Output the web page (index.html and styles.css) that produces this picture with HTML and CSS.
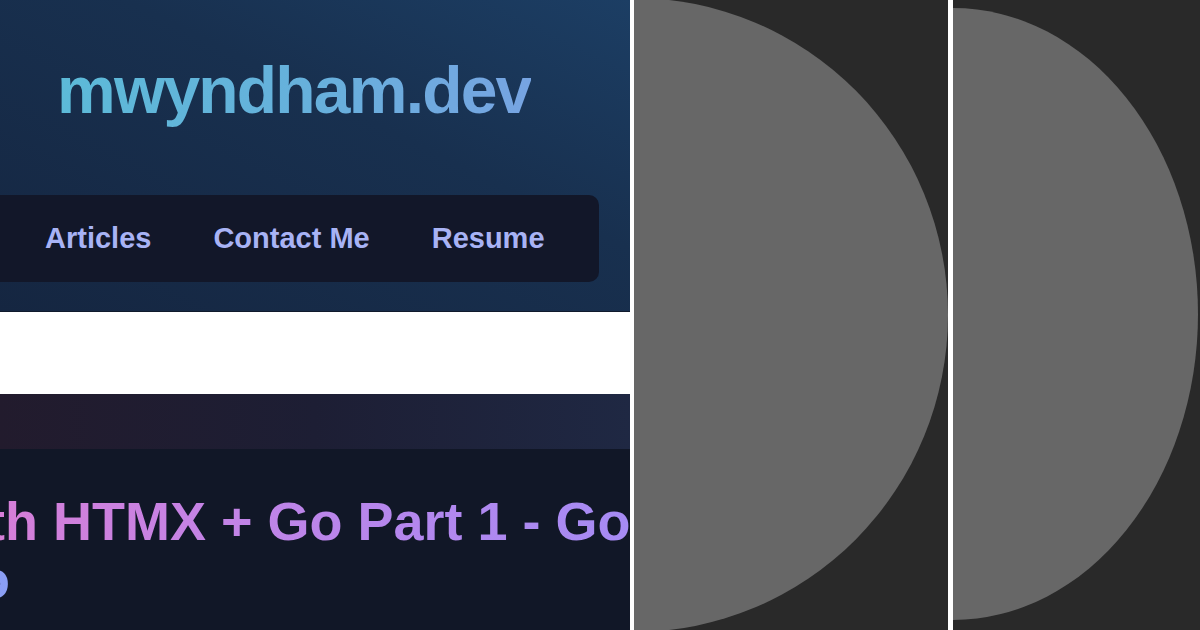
FILE: index.html
```html
<!DOCTYPE html>
<html lang="en">
<head>
<meta charset="utf-8">
<title>mwyndham.dev</title>
<link rel="stylesheet" href="styles.css">
</head>
<body>
<div class="screen">
  <section class="site">
    <header class="masthead">
      <h1 class="brand"><span class="brand-text">mwyndham.dev</span></h1>
      <nav class="nav">
        <a class="nav-link" href="#">Articles</a>
        <a class="nav-link" href="#">Contact Me</a>
        <a class="nav-link" href="#">Resume</a>
      </nav>
    </header>
    <div class="spacer"></div>
    <main class="post">
      <div class="post-band"></div>
      <article class="post-card">
        <h2 class="post-title">
          <span class="line line-1">with HTMX + Go Part 1 - Go</span>
          <span class="line line-2">Go</span>
        </h2>
      </article>
    </main>
  </section>
  <div class="thumb thumb-a">
    <svg class="thumb-art" width="314" height="630" viewBox="0 0 314 630" aria-hidden="true">
      <ellipse cx="0" cy="315" rx="314" ry="317" fill="#676767"/>
    </svg>
  </div>
  <div class="thumb thumb-b">
    <svg class="thumb-art" width="247" height="630" viewBox="0 0 247 630" aria-hidden="true">
      <ellipse cx="0" cy="314" rx="245" ry="306" fill="#676767"/>
    </svg>
  </div>
</div>
</body>
</html>
```
FILE: styles.css
```css
html, body {
  margin: 0;
  padding: 0;
  background: #ffffff;
}

body {
  width: 1200px;
  height: 630px;
  overflow: hidden;
  font-family: "Liberation Sans", Arial, sans-serif;
}

.screen {
  display: flex;
  gap: 4px;
  width: 1200px;
  height: 630px;
  background: #ffffff;
}

.site {
  width: 630px;
  flex: 0 0 630px;
  height: 630px;
  overflow: hidden;
  display: flex;
  flex-direction: column;
  background: #ffffff;
}

.masthead {
  box-sizing: border-box;
  height: 312px;
  flex: 0 0 312px;
  background: linear-gradient(to bottom left, #1c3e64 0%, #18304f 40%, #152641 100%);
  border-bottom: 1px solid #101a2c;
}

.brand {
  margin: 0;
  padding: 57px 0 0 57px;
  font-size: 66px;
  line-height: 66px;
  font-weight: 700;
  letter-spacing: -1.8px;
  white-space: nowrap;
}

.brand-text {
  background: linear-gradient(90deg, #5cbad8 0%, #67b0dc 55%, #77a4e2 100%);
  -webkit-background-clip: text;
  background-clip: text;
  color: transparent;
}

.nav {
  display: flex;
  align-items: center;
  gap: 62px;
  width: max-content;
  height: 87px;
  margin: 72px 0 0 -20px;
  padding: 0 54px 0 65px;
  background: #121729;
  border-radius: 10px;
}

.nav-link {
  font-size: 29px;
  line-height: 29px;
  font-weight: 700;
  color: #a8b3f5;
  text-decoration: none;
  white-space: nowrap;
}

.spacer {
  height: 82px;
  flex: 0 0 82px;
  background: #ffffff;
}

.post {
  flex: 1 1 auto;
  display: flex;
  flex-direction: column;
  background: #111727;
}

.post-band {
  height: 55px;
  flex: 0 0 55px;
  background: linear-gradient(90deg, #221b2d 0%, #1d1e34 50%, #1f2843 100%);
}

.post-card {
  flex: 1 1 auto;
  background: #111727;
  padding-top: 43px;
}

.post-title {
  margin: 0 0 0 -70px;
  font-size: 54px;
  line-height: 58px;
  font-weight: 700;
  white-space: nowrap;
}

.line {
  display: block;
  width: max-content;
  -webkit-background-clip: text;
  background-clip: text;
  color: transparent;
}

.line-1 {
  background-image: linear-gradient(90deg, #e07ad2 0%, #d47fd9 12%, #c483e5 40%, #b387ee 70%, #a68bf4 100%);
}

.line-2 {
  margin-left: 5px;
  background-image: linear-gradient(90deg, #8f98f3 0%, #8a9ff4 100%);
}

.thumb {
  height: 630px;
  background: #292929;
  overflow: hidden;
}

.thumb-a {
  width: 314px;
  flex: 0 0 314px;
}

.thumb-b {
  width: 247px;
  flex: 0 0 247px;
  margin-left: 1px;
}

.thumb-art {
  display: block;
}
```
